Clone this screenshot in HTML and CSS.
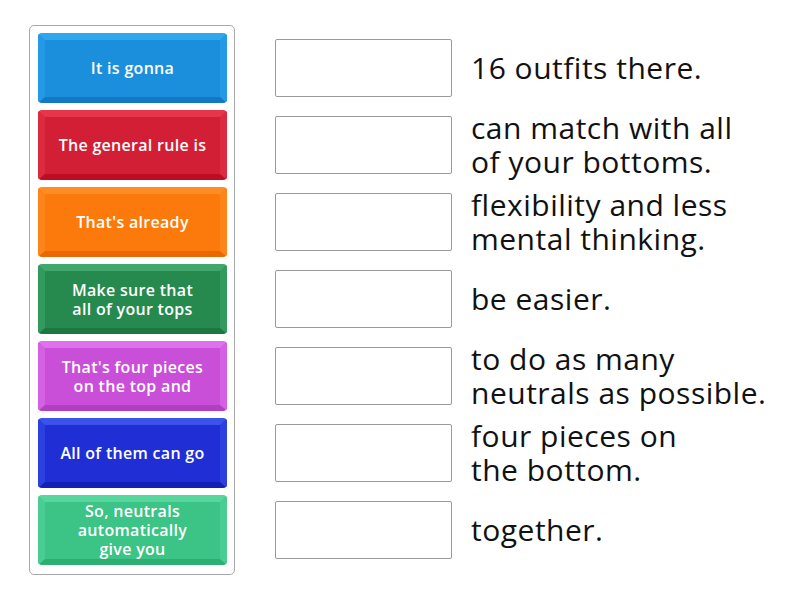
FILE: index.html
```html
<!DOCTYPE html>
<html>
<head>
<meta charset="utf-8">
<link rel="stylesheet" href="styles.css">
</head>
<body>
<div class="activity">
  <div class="panel">
    <div class="tile t-blue">It is gonna</div>
    <div class="tile t-red">The general rule is</div>
    <div class="tile t-orange">That's already</div>
    <div class="tile t-green">Make sure that<br>all of your tops</div>
    <div class="tile t-purple">That's four pieces<br>on the top and</div>
    <div class="tile t-navy">All of them can go</div>
    <div class="tile t-mint">So, neutrals<br>automatically<br>give you</div>
  </div>
  <div class="targets">
    <div class="row"><div class="slot"></div><div class="phrase">16 outfits there.</div></div>
    <div class="row"><div class="slot"></div><div class="phrase">can match with all<br>of your bottoms.</div></div>
    <div class="row"><div class="slot"></div><div class="phrase">flexibility and less<br>mental thinking.</div></div>
    <div class="row"><div class="slot"></div><div class="phrase">be easier.</div></div>
    <div class="row"><div class="slot"></div><div class="phrase">to do as many<br>neutrals as possible.</div></div>
    <div class="row"><div class="slot"></div><div class="phrase">four pieces on<br>the bottom.</div></div>
    <div class="row"><div class="slot"></div><div class="phrase">together.</div></div>
  </div>
</div>
</body>
</html>
```

FILE: styles.css
```css
* { box-sizing: border-box; }
html, body { margin: 0; padding: 0; background: #fff; }
body { font-family: "Open Sans", "Lato", sans-serif; }

.activity {
  display: flex;
  align-items: flex-start;
  padding: 25px 0 0 29px;
}

.panel {
  width: 206px;
  border: 1px solid #a8a8a8;
  border-radius: 5px;
  padding: 7px 7px 9px 8px;
  display: flex;
  flex-direction: column;
  gap: 7px;
}

.tile {
  height: 70px;
  border-radius: 4px;
  border-style: solid;
  border-width: 7px 7px 6px 7px;
  display: flex;
  align-items: center;
  justify-content: center;
  text-align: center;
  color: #fff;
  font-size: 16px;
  font-weight: 600;
  line-height: 19px;
  letter-spacing: 0.3px;
}

.t-blue   { background: #1c8fdc; border-color: #2ea6f0 #249ae6 #1379c2 #249ae6; }
.t-red    { background: #d21f36; border-color: #e6364c #dc2a40 #bd0c24 #dc2a40; }
.t-orange { background: #fb7a0b; border-color: #ff8d24 #fd8418 #e96900 #fd8418; }
.t-green  { background: #268a4f; border-color: #40a86a #329a5c #1c7741 #329a5c; }
.t-purple { background: #c94fd8; border-color: #df70ee #d460e3 #b23ec1 #d460e3; }
.t-navy   { background: #1f2fd5; border-color: #3b52ec #2c40e0 #1421b5 #2c40e0; }
.t-mint   { background: #3cc386; border-color: #57d69d #49cd92 #2eaf72 #49cd92; }

.targets {
  margin-left: 40px;
  padding-top: 8px;
  display: flex;
  flex-direction: column;
  gap: 7px;
}

.row {
  height: 70px;
  display: flex;
  align-items: center;
}

.slot {
  width: 177px;
  height: 58px;
  border: 1px solid #9a9a9a;
  border-radius: 2px;
  background: #fff;
  flex: none;
}

.phrase {
  margin-left: 19px;
  font-size: 30px;
  line-height: 34px;
  letter-spacing: 0.5px;
  color: #111;
  white-space: nowrap;
}
```
